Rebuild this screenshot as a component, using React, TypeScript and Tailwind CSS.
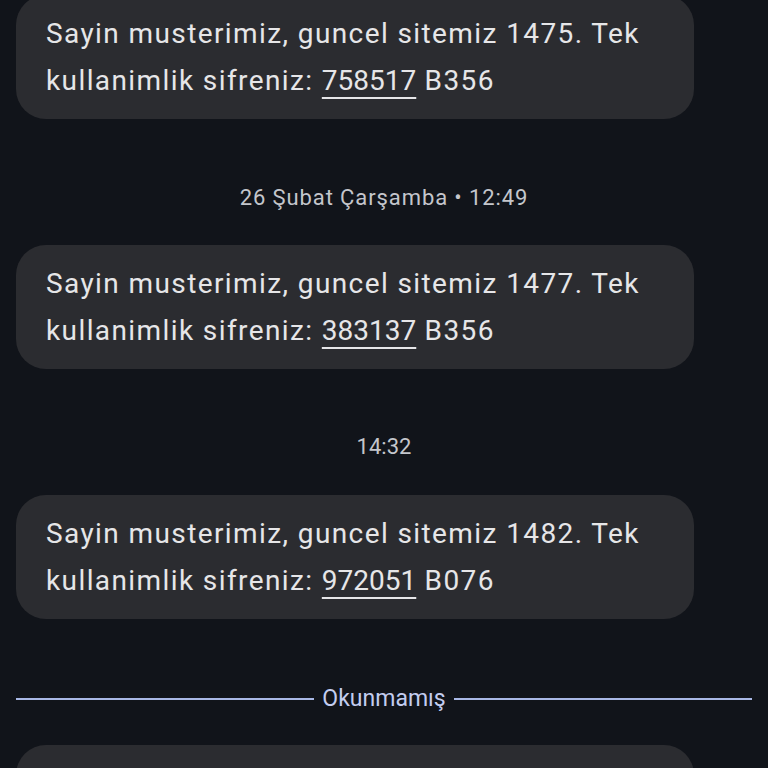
import React from "react";

const Bubble = ({ site, code, suffix }: { site: string; code: string; suffix: string }) => (
  <div className="ml-4 w-[678px] rounded-[30px] bg-[#2b2c30] px-[30px] py-[15px] text-[28px] leading-[47px] tracking-[1.4px] text-[#e6e6e8]">
    <div>Sayin musterimiz, guncel sitemiz {site}. Tek</div>
    <div>
      kullanimlik sifreniz:{" "}
      <span className="tracking-normal underline decoration-2 underline-offset-[7px]">{code}</span> {suffix}
    </div>
  </div>
);

export default function App() {
  return (
    <div
      className="h-[768px] w-[768px] overflow-hidden bg-[#11141a]"
      style={{ fontFamily: "Roboto, 'Noto Sans', sans-serif" }}
    >
      <div className="flex flex-col">
        <div className="-mt-[5px]">
          <Bubble site="1475" code="758517" suffix="B356" />
        </div>
        <div className="mt-[65px] text-center text-[22px] leading-[28px] tracking-[0.9px] text-[#c4c6cc]">
          26 Şubat Çarşamba • 12:49
        </div>
        <div className="mt-[33px]">
          <Bubble site="1477" code="383137" suffix="B356" />
        </div>
        <div className="mt-[64px] text-center text-[22px] leading-[28px] text-[#c4c6cc]">14:32</div>
        <div className="mt-[34px]">
          <Bubble site="1482" code="972051" suffix="B076" />
        </div>
        <div className="mx-4 mt-[66px] flex h-[28px] items-center gap-2">
          <div className="h-[2px] flex-1 bg-[#a9b8e6]" />
          <div className="text-[23px] leading-[28px] text-[#c3cdf0]">Okunmamış</div>
          <div className="h-[2px] flex-1 bg-[#a9b8e6]" />
        </div>
        <div className="mt-[32px]">
          <div className="ml-4 h-[124px] w-[678px] rounded-[30px] bg-[#2b2c30]" />
        </div>
      </div>
    </div>
  );
}
